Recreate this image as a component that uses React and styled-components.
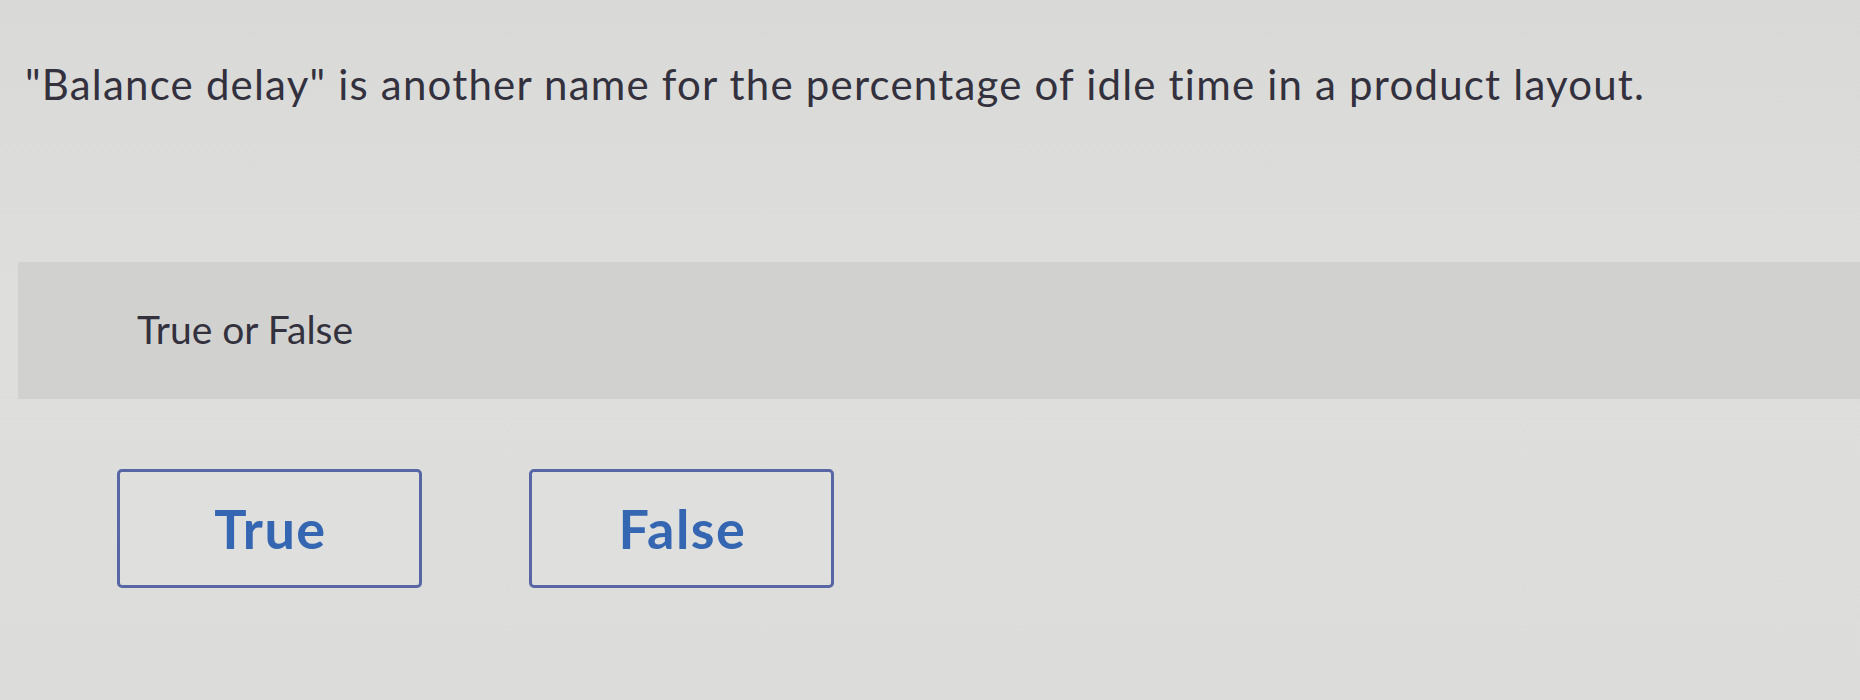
import React from "react";
import styled, { createGlobalStyle } from "styled-components";

const Global = createGlobalStyle`
  html, body { margin: 0; padding: 0; background: #dcdddb; }
  body { font-family: Lato, "Open Sans", sans-serif; }
`;

const Page = styled.div`
  width: 1860px;
  height: 700px;
  background: linear-gradient(180deg, #d9dad7 0%, #dedfdc 45%, #dcddda 100%);
  overflow: hidden;
  display: flex;
  flex-direction: column;
`;

const Question = styled.p`
  margin: 0;
  padding: 59px 0 0 25px;
  height: 262px;
  flex-shrink: 0;
  box-sizing: border-box;
  font-size: 42px;
  line-height: 50px;
  letter-spacing: 1.2px;
  color: #33313e;
  white-space: nowrap;
`;

const Prompt = styled.div`
  margin-left: 18px;
  height: 137px;
  flex-shrink: 0;
  background: #d1d2d0;
  display: flex;
  align-items: flex-start;
  padding: 44px 0 0 119px;
  box-sizing: border-box;
  font-size: 39px;
  line-height: 47px;
  color: #33313e;
`;

const Choices = styled.div`
  display: flex;
  gap: 107px;
  padding: 70px 0 0 117px;
`;

const Choice = styled.button`
  width: 305px;
  height: 119px;
  box-sizing: border-box;
  border: 3px solid #5866a6;
  border-radius: 5px;
  background: #dfe0dd;
  color: #3566b2;
  font-family: Lato, "Open Sans", sans-serif;
  font-weight: 700;
  font-size: 54px;
  letter-spacing: 1.5px;
  display: flex;
  align-items: center;
  justify-content: center;
  padding: 0 0 0 2px;
  cursor: pointer;
`;

export default function App() {
  return (
    <>
      <Global />
      <Page>
        <Question>"Balance delay" is another name for the percentage of idle time in a product layout.</Question>
        <Prompt>True or False</Prompt>
        <Choices>
          <Choice>True</Choice>
          <Choice>False</Choice>
        </Choices>
      </Page>
    </>
  );
}
